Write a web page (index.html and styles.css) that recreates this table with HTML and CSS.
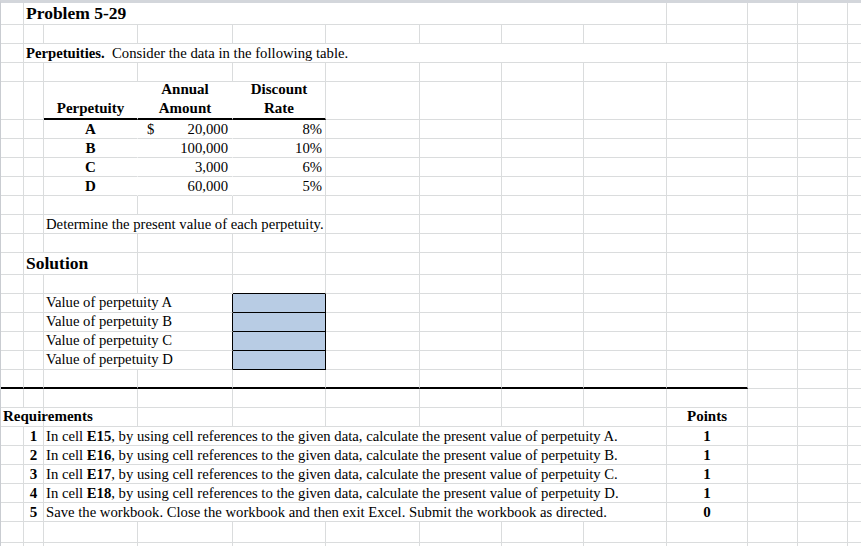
FILE: index.html
```html
<!DOCTYPE html>
<html>
<head>
<meta charset="utf-8">
<link rel="stylesheet" href="styles.css">
</head>
<body>
<div class="sheet">
  <!-- Row 1 -->
  <div class="c"></div>
  <div class="c s8 title">Problem 5-29</div>
  <div class="c"></div><div class="c"></div><div class="c"></div><div class="c"></div>
  <!-- Row 2 -->
  <div class="c"></div><div class="c"></div><div class="c"></div><div class="c"></div><div class="c"></div><div class="c"></div><div class="c"></div><div class="c"></div><div class="c"></div><div class="c"></div><div class="c"></div><div class="c"></div><div class="c"></div>
  <!-- Row 3 -->
  <div class="c"></div>
  <div class="c s9"><b>Perpetuities.</b>&nbsp; Consider the data in the following table.</div>
  <div class="c"></div><div class="c"></div><div class="c"></div>
  <!-- Row 4 -->
  <div class="c"></div><div class="c"></div><div class="c"></div><div class="c"></div><div class="c"></div><div class="c"></div><div class="c"></div><div class="c"></div><div class="c"></div><div class="c"></div><div class="c"></div><div class="c"></div><div class="c"></div>
  <!-- Row 5 header -->
  <div class="c"></div><div class="c"></div>
  <div class="c hd nr">Perpetuity</div>
  <div class="c hd nr">Annual<br>Amount</div>
  <div class="c hd">Discount<br>Rate</div>
  <div class="c"></div><div class="c"></div><div class="c"></div><div class="c"></div><div class="c"></div><div class="c"></div><div class="c"></div><div class="c"></div>
  <!-- Row 6 -->
  <div class="c"></div><div class="c"></div>
  <div class="c nr ctr b">A</div>
  <div class="c nr amt"><span>$</span><span>20,000</span></div>
  <div class="c pct">8%</div>
  <div class="c"></div><div class="c"></div><div class="c"></div><div class="c"></div><div class="c"></div><div class="c"></div><div class="c"></div><div class="c"></div>
  <!-- Row 7 -->
  <div class="c"></div><div class="c"></div>
  <div class="c nr ctr b">B</div>
  <div class="c nr amt"><span></span><span>100,000</span></div>
  <div class="c pct">10%</div>
  <div class="c"></div><div class="c"></div><div class="c"></div><div class="c"></div><div class="c"></div><div class="c"></div><div class="c"></div><div class="c"></div>
  <!-- Row 8 -->
  <div class="c"></div><div class="c"></div>
  <div class="c nr ctr b">C</div>
  <div class="c nr amt"><span></span><span>3,000</span></div>
  <div class="c pct">6%</div>
  <div class="c"></div><div class="c"></div><div class="c"></div><div class="c"></div><div class="c"></div><div class="c"></div><div class="c"></div><div class="c"></div>
  <!-- Row 9 -->
  <div class="c"></div><div class="c"></div>
  <div class="c nr ctr b">D</div>
  <div class="c nr amt"><span></span><span>60,000</span></div>
  <div class="c pct">5%</div>
  <div class="c"></div><div class="c"></div><div class="c"></div><div class="c"></div><div class="c"></div><div class="c"></div><div class="c"></div><div class="c"></div>
  <!-- Row 10 -->
  <div class="c"></div><div class="c"></div><div class="c"></div><div class="c"></div><div class="c"></div><div class="c"></div><div class="c"></div><div class="c"></div><div class="c"></div><div class="c"></div><div class="c"></div><div class="c"></div><div class="c"></div>
  <!-- Row 11 -->
  <div class="c"></div><div class="c"></div>
  <div class="c s3">Determine the present value of each perpetuity.</div>
  <div class="c"></div><div class="c"></div><div class="c"></div><div class="c"></div><div class="c"></div><div class="c"></div><div class="c"></div><div class="c"></div>
  <!-- Row 12 -->
  <div class="c"></div><div class="c"></div><div class="c"></div><div class="c"></div><div class="c"></div><div class="c"></div><div class="c"></div><div class="c"></div><div class="c"></div><div class="c"></div><div class="c"></div><div class="c"></div><div class="c"></div>
  <!-- Row 13 -->
  <div class="c"></div>
  <div class="c s2 title">Solution</div>
  <div class="c"></div><div class="c"></div><div class="c"></div><div class="c"></div><div class="c"></div><div class="c"></div><div class="c"></div><div class="c"></div><div class="c"></div><div class="c"></div>
  <!-- Row 14 -->
  <div class="c"></div><div class="c"></div><div class="c"></div><div class="c"></div><div class="c bb"></div><div class="c"></div><div class="c"></div><div class="c"></div><div class="c"></div><div class="c"></div><div class="c"></div><div class="c"></div><div class="c"></div>
  <!-- Row 15 -->
  <div class="c"></div><div class="c"></div>
  <div class="c s2 lbl">Value of perpetuity A</div>
  <div class="c ans"></div>
  <div class="c"></div><div class="c"></div><div class="c"></div><div class="c"></div><div class="c"></div><div class="c"></div><div class="c"></div><div class="c"></div>
  <!-- Row 16 -->
  <div class="c"></div><div class="c"></div>
  <div class="c s2 lbl">Value of perpetuity B</div>
  <div class="c ans"></div>
  <div class="c"></div><div class="c"></div><div class="c"></div><div class="c"></div><div class="c"></div><div class="c"></div><div class="c"></div><div class="c"></div>
  <!-- Row 17 -->
  <div class="c"></div><div class="c"></div>
  <div class="c s2 lbl">Value of perpetuity C</div>
  <div class="c ans"></div>
  <div class="c"></div><div class="c"></div><div class="c"></div><div class="c"></div><div class="c"></div><div class="c"></div><div class="c"></div><div class="c"></div>
  <!-- Row 18 -->
  <div class="c"></div><div class="c"></div>
  <div class="c s2 lbl">Value of perpetuity D</div>
  <div class="c ans"></div>
  <div class="c"></div><div class="c"></div><div class="c"></div><div class="c"></div><div class="c"></div><div class="c"></div><div class="c"></div><div class="c"></div>
  <!-- Row 19 -->
  <div class="c thick"></div><div class="c thick"></div><div class="c thick"></div><div class="c thick"></div><div class="c thick"></div><div class="c thick"></div><div class="c thick"></div><div class="c thick"></div><div class="c thick"></div><div class="c thick"></div><div class="c"></div><div class="c"></div><div class="c"></div>
  <!-- Row 20 -->
  <div class="c"></div><div class="c"></div><div class="c"></div><div class="c"></div><div class="c"></div><div class="c"></div><div class="c"></div><div class="c"></div><div class="c"></div><div class="c"></div><div class="c"></div><div class="c"></div><div class="c"></div>
  <!-- Row 21 -->
  <div class="c s2 b req">Requirements</div>
  <div class="c"></div><div class="c"></div><div class="c"></div><div class="c"></div><div class="c"></div><div class="c"></div><div class="c"></div>
  <div class="c ctr b req">Points</div>
  <div class="c"></div><div class="c"></div><div class="c"></div>
  <!-- Row 22 -->
  <div class="c"></div>
  <div class="c ctr b">1</div>
  <div class="c s7">In cell&nbsp;<b>E15</b>, by using cell references to the given data, calculate the present value of perpetuity A.</div>
  <div class="c ctr b">1</div>
  <div class="c"></div><div class="c"></div><div class="c"></div>
  <!-- Row 23 -->
  <div class="c"></div>
  <div class="c ctr b">2</div>
  <div class="c s7">In cell&nbsp;<b>E16</b>, by using cell references to the given data, calculate the present value of perpetuity B.</div>
  <div class="c ctr b">1</div>
  <div class="c"></div><div class="c"></div><div class="c"></div>
  <!-- Row 24 -->
  <div class="c"></div>
  <div class="c ctr b">3</div>
  <div class="c s7">In cell&nbsp;<b>E17</b>, by using cell references to the given data, calculate the present value of perpetuity C.</div>
  <div class="c ctr b">1</div>
  <div class="c"></div><div class="c"></div><div class="c"></div>
  <!-- Row 25 -->
  <div class="c"></div>
  <div class="c ctr b">4</div>
  <div class="c s7">In cell&nbsp;<b>E18</b>, by using cell references to the given data, calculate the present value of perpetuity D.</div>
  <div class="c ctr b">1</div>
  <div class="c"></div><div class="c"></div><div class="c"></div>
  <!-- Row 26 -->
  <div class="c"></div>
  <div class="c ctr b">5</div>
  <div class="c s7">Save the workbook. Close the workbook and then exit Excel. Submit the workbook as directed.</div>
  <div class="c ctr b">0</div>
  <div class="c"></div><div class="c"></div><div class="c"></div>
  <!-- Row 27 -->
  <div class="c"></div><div class="c"></div><div class="c"></div><div class="c"></div><div class="c"></div><div class="c"></div><div class="c"></div><div class="c"></div><div class="c"></div><div class="c"></div><div class="c"></div><div class="c"></div><div class="c"></div>
  <!-- Row 28 -->
  <div class="c"></div><div class="c"></div><div class="c"></div><div class="c"></div><div class="c"></div><div class="c"></div><div class="c"></div><div class="c"></div><div class="c"></div><div class="c"></div><div class="c"></div><div class="c"></div><div class="c"></div>
</div>
</body>
</html>
```

FILE: styles.css
```css
html, body {
  margin: 0;
  padding: 0;
  background: #ffffff;
  overflow: hidden;
}

body {
  font-family: "Liberation Serif", "Times New Roman", serif;
  color: #000000;
}

.sheet {
  display: grid;
  grid-template-columns: 23px 20px 94px 95px 93px 94px 82px 82px 83px 81px 50px 50px 50px;
  grid-template-rows: 22px 19px 19px 19px 38px repeat(7, 19px) 22px repeat(13, 19px) 21px 19px;
  width: max-content;
  border-top: 3px solid #d3d6db;
  border-left: 1px solid #c9ccd1;
  font-size: 14.7px;
}

.c {
  box-sizing: border-box;
  border-right: 1px solid #dadcdd;
  border-bottom: 1px solid #dadcdd;
  display: flex;
  align-items: flex-end;
  white-space: nowrap;
  line-height: 17px;
  padding: 0 2px 0 2px;
  min-width: 0;
  overflow: visible;
}

.s2 { grid-column: span 2; }
.s3 { grid-column: span 3; }
.s7 { grid-column: span 7; }
.s8 { grid-column: span 8; }
.s9 { grid-column: span 9; }

.b { font-weight: bold; font-size: 15px; }
.ctr { justify-content: center; }

.title {
  font-weight: bold;
  font-size: 17.5px;
  line-height: 20px;
  padding-bottom: 1px;
}

.hd {
  font-weight: bold;
  font-size: 15px;
  line-height: 19px;
  white-space: normal;
  text-align: center;
  justify-content: center;
  border-bottom: 2px solid #000000;
  padding-bottom: 0;
}

.nr { border-right-color: #ffffff; }

.amt {
  justify-content: space-between;
  padding-left: 9px;
  padding-right: 4px;
}

.pct {
  justify-content: flex-end;
  padding-right: 3px;
}

.lbl { border-right-color: #000000; padding-bottom: 1px; }

.ans {
  background: #b8cce4;
  border-right-color: #000000;
  border-bottom-color: #000000;
}

.bb { border-bottom-color: #000000; }

.thick { border-bottom: 2px solid #000000; }

.req { padding-bottom: 1px; }
```
